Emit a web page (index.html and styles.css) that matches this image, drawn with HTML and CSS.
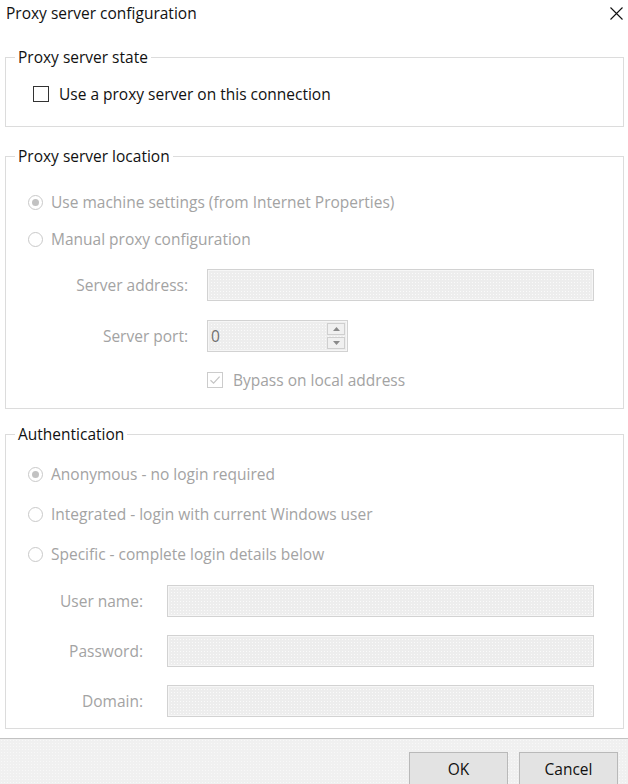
FILE: index.html
```html
<!DOCTYPE html>
<html lang="en">
<head>
<meta charset="utf-8">
<title>Proxy server configuration</title>
<link rel="stylesheet" href="styles.css">
</head>
<body>
<div class="dialog">
  <header class="titlebar">
    <span class="title">Proxy server configuration</span>
    <span class="close" aria-label="Close">
      <svg width="13" height="13" viewBox="0 0 13 13"><path d="M0.5 0.5 L12.5 12.5 M12.5 0.5 L0.5 12.5" stroke="#111" stroke-width="1.1" fill="none"/></svg>
    </span>
  </header>

  <fieldset class="group g-state">
    <legend>Proxy server state</legend>
    <div class="check-row state-row"><span class="box"></span><span class="txt">Use a proxy server on this connection</span></div>
  </fieldset>

  <fieldset class="group g-location">
    <legend>Proxy server location</legend>
    <div class="radios">
      <div class="radio-row"><span class="radio checked"></span><span class="txt dis">Use machine settings (from Internet Properties)</span></div>
      <div class="radio-row"><span class="radio"></span><span class="txt dis">Manual proxy configuration</span></div>
    </div>
    <div class="form form-loc">
      <span class="lbl">Server address:</span>
      <div class="field"></div>
      <span class="lbl">Server port:</span>
      <div class="field spin">
        <span class="val">0</span>
        <span class="spin-btns">
          <span class="sb"><svg width="7" height="4" viewBox="0 0 7 4"><path d="M0 4 L3.5 0 L7 4 Z" fill="#8a8a8a"/></svg></span>
          <span class="sb"><svg width="7" height="4" viewBox="0 0 7 4"><path d="M0 0 L3.5 4 L7 0 Z" fill="#8a8a8a"/></svg></span>
        </span>
      </div>
      <span class="lbl"></span>
      <div class="check-row bypass"><span class="box dis"><svg width="14" height="14" viewBox="0 0 14 14"><path d="M2.5 7.2 L5.6 10.2 L11.6 3.6" stroke="#c4c4c4" stroke-width="1.2" fill="none"/></svg></span><span class="txt dis">Bypass on local address</span></div>
    </div>
  </fieldset>

  <fieldset class="group g-auth">
    <legend>Authentication</legend>
    <div class="radios">
      <div class="radio-row"><span class="radio checked"></span><span class="txt dis">Anonymous - no login required</span></div>
      <div class="radio-row"><span class="radio"></span><span class="txt dis">Integrated - login with current Windows user</span></div>
      <div class="radio-row"><span class="radio"></span><span class="txt dis">Specific - complete login details below</span></div>
    </div>
    <div class="form form-auth">
      <span class="lbl">User name:</span>
      <div class="field"></div>
      <span class="lbl">Password:</span>
      <div class="field"></div>
      <span class="lbl">Domain:</span>
      <div class="field"></div>
    </div>
  </fieldset>

  <footer class="footer">
    <button class="btn">OK</button>
    <button class="btn">Cancel</button>
  </footer>
</div>
</body>
</html>
```
FILE: styles.css
```css
* { box-sizing: border-box; }
html, body { margin: 0; padding: 0; background: #fff; }
body {
  font-family: "Open Sans", "Noto Sans", "Liberation Sans", sans-serif;
  font-size: 15.5px;
  color: #111;
}
.dialog {
  width: 628px;
  height: 784px;
  display: flex;
  flex-direction: column;
  overflow: hidden;
}
.titlebar {
  height: 26px;
  display: flex;
  align-items: center;
  justify-content: space-between;
  padding: 0 5px 0 6px;
  flex: none;
}
.title { line-height: 26px; }
.close { display: flex; width: 13px; height: 13px; }

.group {
  margin: 0 4px 0 5px;
  padding: 0;
  border: 1px solid #dcdcdc;
  min-width: 0;
  flex: none;
}
.group legend {
  margin-left: 9px;
  padding: 0 3px;
  line-height: 20px;
  color: #111;
}
.g-state { margin-top: 21px; padding: 17px 0 22px; }
.g-location { margin-top: 19px; padding: 26px 0 17px; }
.g-auth { margin-top: 15px; padding: 20px 0 11px; }

.check-row, .radio-row {
  display: flex;
  align-items: center;
  height: 20px;
  white-space: nowrap;
}
.state-row { margin-left: 27px; }
.box {
  width: 16px;
  height: 16px;
  border: 1px solid #333;
  background: #fff;
  flex: none;
  display: flex;
  align-items: center;
  justify-content: center;
}
.box.dis { border-color: #cccccc; }
.check-row .txt { margin-left: 10px; }

.radios { display: flex; flex-direction: column; margin-left: 22px; }
.g-location .radios { gap: 17px; }
.g-auth .radios { gap: 20px; }
.radio {
  width: 15px;
  height: 15px;
  border: 1px solid #c9c9c9;
  border-radius: 50%;
  background: #fff;
  flex: none;
  display: flex;
  align-items: center;
  justify-content: center;
}
.radio.checked::after {
  content: "";
  width: 7px;
  height: 7px;
  border-radius: 50%;
  background: #c2c2c2;
}
.radio-row .txt { margin-left: 8px; }
.dis { color: #a3a3a3; }

.form {
  display: grid;
  align-items: center;
  padding-right: 29px;
}
.form-loc {
  grid-template-columns: 182px 1fr;
  grid-template-rows: 32px 32px 20px;
  column-gap: 19px;
  row-gap: 19px;
  margin-top: 20px;
}
.form-loc .bypass { margin-top: -2px; }
.form-auth {
  grid-template-columns: 137px 1fr;
  grid-template-rows: 32px 32px 32px;
  column-gap: 24px;
  row-gap: 18px;
  margin-top: 21px;
}
.lbl {
  text-align: right;
  color: #a3a3a3;
  white-space: nowrap;
}
.field {
  height: 32px;
  border: 1px solid #d2d2d2;
  box-shadow: inset 0 0 0 1px #f6f6f6;
  background-color: #ededed;
  background-image: radial-gradient(circle, #fafafa 0.7px, transparent 0.9px);
  background-size: 3px 3px;
  background-position: 2px 2px;
}
.spin {
  width: 141px;
  display: flex;
  align-items: center;
  justify-content: space-between;
  padding: 0 2px 0 3px;
}
.val { color: #707070; line-height: 20px; }
.spin-btns {
  display: flex;
  flex-direction: column;
  gap: 2px;
}
.sb {
  width: 18px;
  height: 12px;
  border: 1px solid #cfcfcf;
  background: #f0f0f0;
  display: flex;
  align-items: center;
  justify-content: center;
}

.footer {
  margin-top: 9px;
  flex: 1;
  border-top: 1px solid #c2c2c2;
  background-color: #f0f0f0;
  background-image: radial-gradient(circle, #f8f8f8 0.7px, transparent 0.9px);
  background-size: 3px 3px;
  display: flex;
  justify-content: flex-end;
  align-items: flex-start;
  gap: 11px;
  padding: 13px 10px 0 0;
}
.btn {
  width: 99px;
  height: 33px;
  border: 1px solid #b9b9b9;
  background-color: #e3e3e3;
  font-family: inherit;
  font-size: 15.5px;
  color: #111;
  padding: 0;
}
```
